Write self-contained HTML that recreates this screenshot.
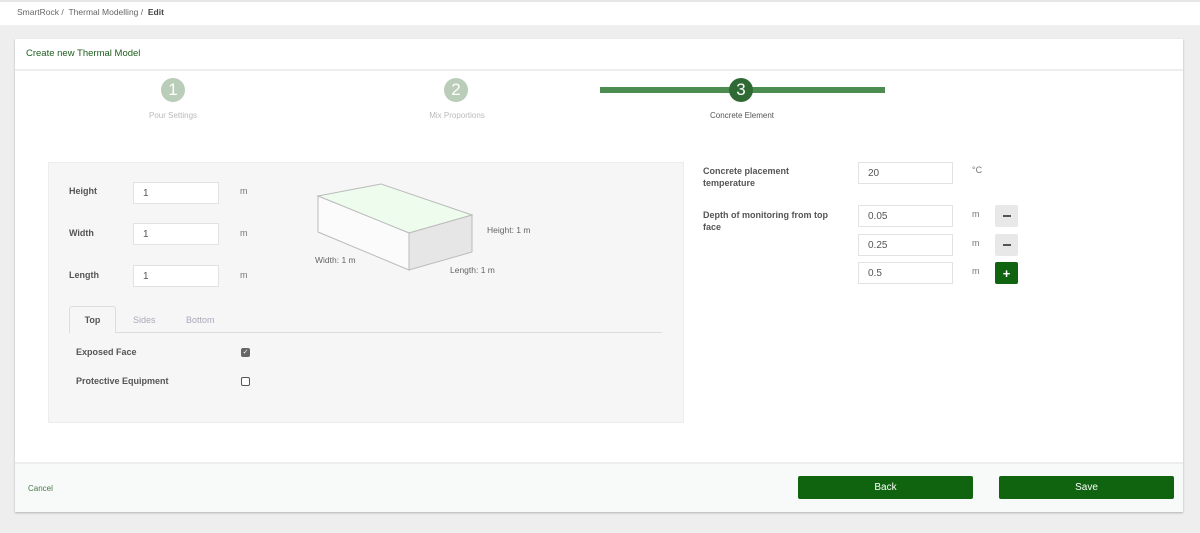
<!DOCTYPE html>
<html><head><style>
*{box-sizing:border-box;margin:0;padding:0}
body{width:1200px;height:533px;background:#eeeeee;font-family:"Liberation Sans",sans-serif;position:relative;overflow:hidden;color:#555}
.a{position:absolute}
.inp{position:absolute;background:#fff;border:1px solid #e2e2e2;font-size:10px;color:#555;padding-left:9px;display:flex;align-items:center}
.lbl{position:absolute;font-size:9px;font-weight:bold;color:#555}
.u{position:absolute;font-size:9px;color:#777}
.circ{position:absolute;width:24px;height:24px;border-radius:50%;color:#fff;font-size:17px;display:flex;align-items:center;justify-content:center}
.st{position:absolute;font-size:8px;color:#bbb;text-align:center;width:160px}
.btn{position:absolute;background:#10640f;color:#fff;font-size:10px;display:flex;align-items:center;justify-content:center;border-radius:2px}
.sq{position:absolute;width:23px;height:22px;border-radius:2px;display:flex;align-items:center;justify-content:center}
</style></head><body>
<div class="a" style="left:0;top:0;width:1200px;height:25px;background:#fff;border-top:2px solid #e6e6e6"></div>
<div class="a" style="left:17px;top:7px;font-size:8.5px;color:#666">SmartRock / &nbsp;Thermal Modelling / &nbsp;<b style="color:#444">Edit</b></div>

<div class="a" style="left:15px;top:39px;width:1168px;height:473px;background:#fff;box-shadow:0 1px 2px rgba(0,0,0,.25)"></div>
<div class="a" style="left:15px;top:69px;width:1168px;height:2px;background:#eee"></div>
<div class="a" style="left:26px;top:48px;font-size:9.5px;color:#1e5e1e">Create new Thermal Model</div>

<div class="a" style="left:600px;top:87px;width:285px;height:6px;background:#4c8c50"></div>
<div class="circ" style="left:161px;top:78px;background:#b9cdb9">1</div>
<div class="circ" style="left:444px;top:78px;background:#b9cdb9">2</div>
<div class="circ" style="left:729px;top:78px;background:#2f6a34">3</div>
<div class="st" style="left:93px;top:111px">Pour Settings</div>
<div class="st" style="left:377px;top:111px">Mix Proportions</div>
<div class="st" style="left:662px;top:111px;color:#555">Concrete Element</div>

<div class="a" style="left:48px;top:162px;width:636px;height:261px;background:#f6f6f6;border:1px solid #ececec"></div>
<div class="lbl" style="left:69px;top:186px">Height</div>
<div class="lbl" style="left:69px;top:228px">Width</div>
<div class="lbl" style="left:69px;top:270px">Length</div>
<div class="inp" style="left:133px;top:182px;width:86px;height:22px">1</div>
<div class="inp" style="left:133px;top:223px;width:86px;height:22px">1</div>
<div class="inp" style="left:133px;top:265px;width:86px;height:22px">1</div>
<div class="u" style="left:240px;top:186px">m</div>
<div class="u" style="left:240px;top:228px">m</div>
<div class="u" style="left:240px;top:270px">m</div>
<svg class="a" style="left:300px;top:180px" width="250" height="100">
<polygon points="18,16 81,4 172,35 109,53" fill="#eefcee" stroke="#bbb" stroke-width="1"/>
<polygon points="18,16 109,53 109,90 18,52" fill="#fbfbfb" stroke="#bbb" stroke-width="1"/>
<polygon points="109,53 172,35 172,72 109,90" fill="#e6e6e6" stroke="#bbb" stroke-width="1"/>
<text x="187" y="53" font-size="8.5" fill="#666" font-family="Liberation Sans">Height: 1 m</text>
<text x="15" y="83" font-size="8.5" fill="#666" font-family="Liberation Sans">Width: 1 m</text>
<text x="150" y="93" font-size="8.5" fill="#666" font-family="Liberation Sans">Length: 1 m</text>
</svg>
<div class="a" style="left:69px;top:332px;width:593px;height:1px;background:#ddd"></div>
<div class="a" style="left:69px;top:306px;width:47px;height:27px;background:#f6f6f6;border:1px solid #ddd;border-bottom:none;border-radius:3px 3px 0 0;font-size:9px;font-weight:bold;color:#555;text-align:center;line-height:26px">Top</div>
<div class="a" style="left:133px;top:315px;font-size:9px;color:#aab">Sides</div>
<div class="a" style="left:186px;top:315px;font-size:9px;color:#aab">Bottom</div>
<div class="lbl" style="left:76px;top:347px">Exposed Face</div>
<div class="lbl" style="left:76px;top:376px">Protective Equipment</div>
<div class="a" style="left:241px;top:348px;width:9px;height:9px;background:#666;border-radius:2px;color:#fff;font-size:7px;line-height:9px;text-align:center">✓</div>
<div class="a" style="left:241px;top:377px;width:9px;height:9px;border:1px solid #555;border-radius:2px;background:#fff"></div>

<div class="lbl" style="left:703px;top:165px;line-height:12px">Concrete placement<br>temperature</div>
<div class="lbl" style="left:703px;top:209px;line-height:12px">Depth of monitoring from top<br>face</div>
<div class="inp" style="left:858px;top:162px;width:95px;height:22px">20</div>
<div class="inp" style="left:858px;top:205px;width:95px;height:22px">0.05</div>
<div class="inp" style="left:858px;top:234px;width:95px;height:22px">0.25</div>
<div class="inp" style="left:858px;top:262px;width:95px;height:22px">0.5</div>
<div class="u" style="left:972px;top:165px">°C</div>
<div class="u" style="left:972px;top:209px">m</div>
<div class="u" style="left:972px;top:238px">m</div>
<div class="u" style="left:972px;top:266px">m</div>
<div class="sq" style="left:995px;top:205px;background:#e8e8e8"><div style="width:8px;height:2px;background:#555"></div></div>
<div class="sq" style="left:995px;top:234px;background:#e8e8e8"><div style="width:8px;height:2px;background:#555"></div></div>
<div class="sq" style="left:995px;top:262px;background:#10640f;color:#fff;font-weight:bold;font-size:13px">+</div>

<div class="a" style="left:15px;top:462px;width:1168px;height:2px;background:#eee"></div>
<div class="a" style="left:15px;top:464px;width:1168px;height:48px;background:#f8f9f9"></div>
<div class="a" style="left:28px;top:484px;font-size:8px;color:#4a7a4a">Cancel</div>
<div class="btn" style="left:798px;top:476px;width:175px;height:23px">Back</div>
<div class="btn" style="left:999px;top:476px;width:175px;height:23px">Save</div>
</body></html>
